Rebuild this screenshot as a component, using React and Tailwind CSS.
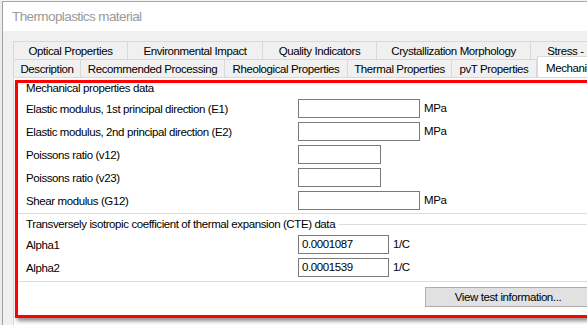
import React from 'react';

const row1 = [
  { label: 'Optical Properties', w: 115 },
  { label: 'Environmental Impact', w: 135 },
  { label: 'Quality Indicators', w: 114 },
  { label: 'Crystallization Morphology', w: 154 },
  { label: 'Stress -', w: 70 },
];

const row2 = [
  { label: 'Description', w: 68 },
  { label: 'Recommended Processing', w: 144 },
  { label: 'Rheological Properties', w: 123 },
  { label: 'Thermal Properties', w: 104 },
  { label: 'pvT Properties', w: 85 },
];

function Field({ label, width, value, unit }) {
  return (
    <div className="flex items-center h-[23px]">
      <div className="w-[272px] shrink-0 pt-[2px] text-black">{label}</div>
      <div
        className="h-[19px] shrink-0 border border-[#7a7a7a] bg-white px-[3px] pt-[1px] flex items-center text-black"
        style={{ width }}
      >
        {value}
      </div>
      {unit && <span className="ml-[4px] pt-[1px] text-black">{unit}</span>}
    </div>
  );
}

export default function App() {
  return (
    <div
      className="w-[587px] h-[325px] overflow-hidden relative bg-[#f0f0f0] text-[11.5px] tracking-[-0.4px]"
      style={{ fontFamily: '"Liberation Sans", Arial, sans-serif' }}
    >
      <div className="h-[1px] bg-[#f4f4f4]" />
      <div className="flex h-[324px]">
        <div className="w-[3px] shrink-0 bg-[#ececec] border-r border-[#a0a0a0]" />
        <div className="flex-1 min-w-0 flex flex-col">
          {/* Title bar */}
          <div className="h-[30px] bg-white border-t border-[#a8a8a8] flex items-center pl-[9px] pt-[1px] text-[13.5px] text-[#9a9a9a] tracking-[-0.6px]">
            Thermoplastics material
          </div>

          {/* Tab control */}
          <div className="pl-[10px] pt-[10px] flex-1 min-w-0 flex flex-col">
            <div className="flex h-[18px] overflow-hidden">
              {row1.map((t) => (
                <div
                  key={t.label}
                  className="shrink-0 border-t border-r border-[#d9d9d9] first:border-l flex items-center justify-center pt-[2px] text-black"
                  style={{ width: t.w }}
                >
                  {t.label}
                </div>
              ))}
            </div>
            <div className="flex h-[18px] relative z-10">
              {row2.map((t) => (
                <div
                  key={t.label}
                  className="shrink-0 border-t border-r border-[#d9d9d9] first:border-l flex items-center justify-center pt-[2px] text-black"
                  style={{ width: t.w }}
                >
                  {t.label}
                </div>
              ))}
              <div className="flex-1 min-w-0 overflow-hidden whitespace-nowrap h-[21px] -mt-[3px] bg-white border-t border-l border-[#d9d9d9] pl-[8px] pt-[3px] text-black">
                Mechanical
              </div>
            </div>

            {/* Panel */}
            <div className="flex-1 bg-white border-t border-l border-[#d9d9d9] relative">
              <div className="pl-[12px] h-[19px] flex items-center pt-[3px] text-black">
                Mechanical properties data
              </div>
              <div className="pl-[12px]">
                <Field label="Elastic modulus, 1st principal direction (E1)" width={122} unit="MPa" />
                <Field label="Elastic modulus, 2nd principal direction (E2)" width={122} unit="MPa" />
                <Field label="Poissons ratio (v12)" width={83} />
                <Field label="Poissons ratio (v23)" width={83} />
                <Field label="Shear modulus (G12)" width={122} unit="MPa" />
              </div>
              <div className="mt-[1px] ml-[4px] h-[1px] bg-[#dcdcdc]" />

              <div className="pl-[12px] h-[19px] flex items-center gap-[4px] text-black">
                <span className="shrink-0 pt-[2px]">
                  Transversely isotropic coefficient of thermal expansion (CTE) data
                </span>
                <div className="flex-1 h-[1px] bg-[#dcdcdc] mt-[1px]" />
              </div>
              <div className="pl-[12px]">
                <Field label="Alpha1" width={91} value="0.0001087" unit="1/C" />
                <Field label="Alpha2" width={91} value="0.0001539" unit="1/C" />
              </div>
              <div className="mt-[2px] ml-[4px] h-[1px] bg-[#dcdcdc]" />

              <div className="flex justify-end mt-[5px] -mr-[4px]">
                <div className="w-[166px] h-[20px] bg-[#e1e1e1] border border-[#adadad] flex items-center justify-center pt-[1px] text-black">
                  View test information...
                </div>
              </div>
            </div>
          </div>
        </div>
      </div>

      {/* Red annotation rectangle */}
      <div className="absolute left-[15px] top-[80px] w-[580px] h-[238px] border-[3px] border-[#ff0000] shadow-[2px_3px_4px_rgba(0,0,0,0.45)] pointer-events-none" />
    </div>
  );
}
